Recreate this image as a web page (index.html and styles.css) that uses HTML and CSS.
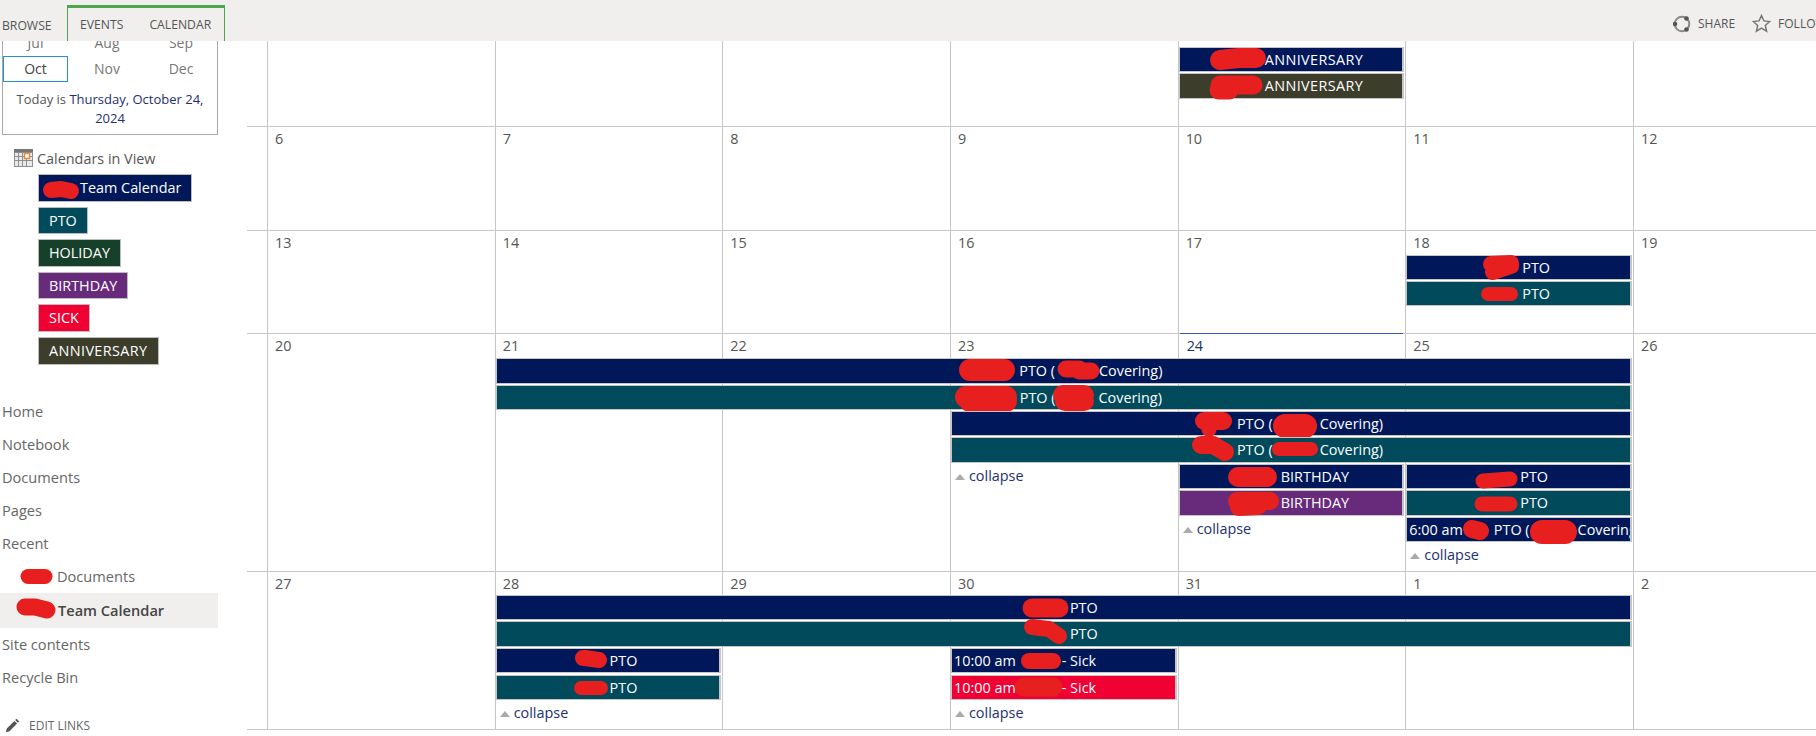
FILE: index.html
```html
<!DOCTYPE html>
<html lang="en">
<head>
<meta charset="utf-8">
<title>Team Calendar</title>
<link rel="stylesheet" href="styles.css">
</head>
<body>
<header class="ribbon">
  <span class="tab tab-browse">BROWSE</span>
  <div class="tab-group">
    <span class="tab">EVENTS</span>
    <span class="tab">CALENDAR</span>
  </div>
  <div class="tools">
    <svg class="tool-icon" width="18" height="20" viewBox="0 0 18 20"><circle class="share-ring" cx="9" cy="10" r="7.3"/><circle class="share-dot" cx="13.5" cy="4.5" r="2.3"/><circle class="share-dot" cx="2" cy="10" r="2.3"/><circle class="share-dot" cx="13.5" cy="15.5" r="2.3"/></svg>
    <span class="tool-label">SHARE</span>
    <svg class="tool-icon star" width="19" height="19" viewBox="0 0 19 19"><path class="star-path" d="M9.5 1.5l2.4 5.4 5.8.6-4.4 3.9 1.3 5.8-5.1-3-5.1 3 1.3-5.8-4.4-3.9 5.8-.6z"/></svg>
    <span class="tool-label">FOLLOW</span>
  </div>
</header>

<div class="main">
  <aside class="sidebar">
    <section class="picker">
      <div class="months">
        <span>Jul</span><span>Aug</span><span>Sep</span>
        <span class="current">Oct</span><span>Nov</span><span>Dec</span>
      </div>
      <p class="today-line">Today is <a>Thursday, October 24, 2024</a></p>
    </section>

    <h2 class="view-title">
      <svg width="19" height="18" viewBox="0 0 19 18"><rect width="19" height="18" fill="#8f8f8f"/><rect y="0" width="19" height="3" fill="#777"/><g fill="#e9e9e9"><rect x="1" y="4" width="3" height="3"/><rect x="5" y="4" width="3" height="3"/><rect x="9" y="4" width="3" height="3"/><rect x="13" y="4" width="5" height="3"/><rect x="1" y="8" width="3" height="3"/><rect x="5" y="8" width="3" height="3"/><rect x="9" y="8" width="3" height="3"/><rect x="13" y="8" width="5" height="3"/><rect x="1" y="12" width="3" height="5"/><rect x="5" y="12" width="3" height="5"/><rect x="9" y="12" width="3" height="5"/><rect x="13" y="12" width="5" height="5"/></g><rect x="10.5" y="4.5" width="5" height="5" fill="#fff" stroke="#e8873a" stroke-width="1.4"/></svg>
      Calendars in View
    </h2>
    <ul class="chips">
      <li class="chip navy"><svg class="blob" width="31" height="25"><path stroke-width="16" d="M2 15L12 14 22 16"/></svg>Team Calendar</li>
      <li class="chip teal">PTO</li>
      <li class="chip green">HOLIDAY</li>
      <li class="chip purple">BIRTHDAY</li>
      <li class="chip red">SICK</li>
      <li class="chip olive wide">ANNIVERSARY</li>
    </ul>

    <nav class="nav">
      <a class="nav-item">Home</a>
      <a class="nav-item">Notebook</a>
      <a class="nav-item">Documents</a>
      <a class="nav-item">Pages</a>
      <a class="nav-item">Recent</a>
      <a class="nav-item sub"><svg class="blob" width="30" height="33"><path stroke-width="15" d="M1 16.5H18"/></svg>Documents</a>
      <a class="nav-item sub selected"><svg class="blob" width="31" height="35"><path stroke-width="17" d="M-2 14L8 14 20 17"/></svg>Team Calendar</a>
      <a class="nav-item">Site contents</a>
      <a class="nav-item">Recycle Bin</a>
    </nav>
    <a class="edit-links">
      <svg width="15" height="15" viewBox="0 0 15 15"><path fill="#555" d="M11.5.8l2.7 2.7-1.3 1.3-2.7-2.7zM9.4 2.9l2.7 2.7-7.6 7.6-3.7 1 1-3.7z"/></svg>
      EDIT LINKS
    </a>
  </aside>

  <section class="calendar">
    <div class="week w1">
      <div class="cell c1"></div><div class="cell c2"></div><div class="cell c3"></div><div class="cell c4"></div><div class="cell c5"></div><div class="cell c6"></div><div class="cell c7"></div>
      <div class="ev navy wide c5 r2"><svg class="blob" width="46" height="23"><path stroke-width="20" d="M1 12L20 10 37 10"/></svg>ANNIVERSARY</div>
      <div class="ev olive wide c5 r3"><svg class="blob" width="46" height="23"><path stroke-width="19" d="M1 11L34 11M0 16L10 16"/></svg>ANNIVERSARY</div>
    </div>

    <div class="week w2">
      <div class="cell c1"><span class="num">6</span></div><div class="cell c2"><span class="num">7</span></div><div class="cell c3"><span class="num">8</span></div><div class="cell c4"><span class="num">9</span></div><div class="cell c5"><span class="num">10</span></div><div class="cell c6"><span class="num">11</span></div><div class="cell c7"><span class="num">12</span></div>
    </div>

    <div class="week w3">
      <div class="cell c1"><span class="num">13</span></div><div class="cell c2"><span class="num">14</span></div><div class="cell c3"><span class="num">15</span></div><div class="cell c4"><span class="num">16</span></div><div class="cell c5"><span class="num">17</span></div><div class="cell c6"><span class="num">18</span></div><div class="cell c7"><span class="num">19</span></div>
      <div class="ev navy c6 r2"><svg class="blob" width="35" height="23"><path stroke-width="16" d="M4 8L24 7 24 10 6 16"/></svg>PTO</div>
      <div class="ev teal c6 r3"><svg class="blob" width="35" height="23"><path stroke-width="14" d="M1 12H24"/></svg>PTO</div>
    </div>

    <div class="week w4">
      <div class="cell c1"><span class="num">20</span></div><div class="cell c2"><span class="num">21</span></div><div class="cell c3"><span class="num">22</span></div><div class="cell c4"><span class="num">23</span></div><div class="cell c5"><span class="num today">24</span></div><div class="cell c6"><span class="num">25</span></div><div class="cell c7"><span class="num">26</span></div>
      <div class="ev navy c2 s5 r2"><svg class="blob" width="55" height="23"><path stroke-width="22" d="M6 11H40"/></svg>PTO (<svg class="blob" width="44" height="23"><path stroke-width="17" d="M11 10H24M24 12H36"/></svg>Covering)</div>
      <div class="ev teal c2 s5 r3"><svg class="blob" width="55" height="23"><path stroke-width="22" d="M1 11L41 11M5 15L41 15"/></svg>PTO (<svg class="blob" width="43" height="23"><path stroke-width="20" d="M8 9H29M10 15H29"/></svg>Covering)</div>
      <div class="ev navy c4 s3 r4"><svg class="blob" width="38" height="23"><path stroke-width="18" d="M5 9L24 9"/><path stroke-width="13" d="M9 18L11 18"/></svg>PTO (<svg class="blob" width="47" height="23"><path stroke-width="24" d="M12 14H32"/></svg>Covering)</div>
      <div class="ev teal c4 s3 r5"><svg class="blob" width="38" height="23"><path stroke-width="18" d="M2 7L14 7 26 14"/></svg>PTO (<svg class="blob" width="47" height="23"><path stroke-width="14" d="M6 11H38"/></svg>Covering)</div>
      <div class="more c4 r6"><i class="tri"></i>collapse</div>
      <div class="ev navy c5 r6"><svg class="blob" width="48" height="23"><path stroke-width="20" d="M5 12H34"/></svg>BIRTHDAY</div>
      <div class="ev purple c5 r7"><svg class="blob" width="48" height="23"><path stroke-width="18" d="M4 10H37M6 16L25 15"/></svg>BIRTHDAY</div>
      <div class="more c5 r8"><i class="tri"></i>collapse</div>
      <div class="ev navy c6 r6"><svg class="blob" width="31" height="23"><path stroke-width="15" d="M-6 16L21 14"/></svg>PTO</div>
      <div class="ev teal c6 r7"><svg class="blob" width="31" height="23"><path stroke-width="15" d="M-7 13H21"/></svg>PTO</div>
      <div class="ev navy timed c6 r8"><span class="clip">6:00 am<svg class="blob" width="31" height="23"><path stroke-width="18" d="M9 11L17 13"/></svg>PTO (<svg class="blob" width="48" height="23"><path stroke-width="24" d="M12 14H35"/></svg>Covering)</span></div>
      <div class="more c6 r9"><i class="tri"></i>collapse</div>
    </div>

    <div class="week w5">
      <div class="cell c1"><span class="num">27</span></div><div class="cell c2"><span class="num">28</span></div><div class="cell c3"><span class="num">29</span></div><div class="cell c4"><span class="num">30</span></div><div class="cell c5"><span class="num">31</span></div><div class="cell c6"><span class="num">1</span></div><div class="cell c7"><span class="num">2</span></div>
      <div class="ev navy c2 s5 r2"><svg class="blob" width="41" height="23"><path stroke-width="19" d="M3 12H30"/></svg>PTO</div>
      <div class="ev teal c2 s5 r3"><svg class="blob" width="41" height="23"><path stroke-width="16" d="M3 5L20 7 30 14"/></svg>PTO</div>
      <div class="ev navy c2 r4"><svg class="blob" width="31" height="23"><path stroke-width="16" d="M4 9L6 9 20 11"/></svg>PTO</div>
      <div class="ev teal c2 r5"><svg class="blob" width="31" height="23"><path stroke-width="14" d="M2 12H22"/></svg>PTO</div>
      <div class="more c2 r6"><i class="tri"></i>collapse</div>
      <div class="ev navy timed c4 r4">10:00 am<svg class="blob" width="46" height="23"><path stroke-width="16" d="M13 12H37"/></svg>- Sick</div>
      <div class="ev red timed c4 r5">10:00 am<svg class="blob" width="46" height="23"><path stroke-width="19" d="M8 11H37"/></svg>- Sick</div>
      <div class="more c4 r6"><i class="tri"></i>collapse</div>
    </div>
  </section>
</div>
</body>
</html>
```
FILE: styles.css
```css
* { box-sizing: border-box; }
html, body { margin: 0; height: 736px; overflow: hidden; background: #fff; }
body { font-family: "Open Sans", "Liberation Sans", sans-serif; font-size: 14px; color: #555; }

/* ribbon */
.ribbon { position: relative; z-index: 2; display: flex; height: 41px; background: #f0efed; font-size: 12.2px; color: #555; }
.tab { line-height: 1; }
.tab-browse { padding: 20px 0 0 2px; width: 67px; }
.tab-group { display: flex; width: 158px; height: 36px; margin-top: 5px; border: 1px solid #4ea54c; border-top-width: 3px; border-bottom: 0; }
.tab-group .tab { padding: 11px 0 0 12px; }
.tab-group .tab + .tab { padding-left: 26px; }
.tools { display: flex; align-items: center; width: 143px; margin-left: auto; overflow: hidden; flex-shrink: 0; padding-top: 6px; font-size: 12px; }
.tool-icon { flex: none; }
.tool-label { flex: none; margin-left: 7px; }
.star { margin-left: 17px; }
.share-ring { fill: none; stroke: #888; stroke-width: 2; }
.share-dot { fill: #555; }
.star-path { fill: none; stroke: #777; stroke-width: 1.5; }

.main { display: flex; height: 695px; }

/* sidebar */
.sidebar { width: 247px; flex: none; }
.picker { width: 216px; margin: -12px 0 0 2px; border: 1px solid #a9a9a9; }
.months { display: grid; grid-template-columns: 65px 74px 70px; column-gap: 2px; text-align: center; color: #777; line-height: 26px; }
.months .current { color: #444; outline: 1px solid #2a8dd4; outline-offset: -1px; }
.today-line { margin: 8px 0 6px; padding: 0 6px; text-align: center; font-size: 13px; line-height: 19px; color: #555; }
.today-line a { color: #23306f; }
.view-title { display: flex; align-items: center; gap: 4px; margin: 13px 0 0 14px; height: 20px; font-size: 14.4px; font-weight: 400; color: #555; }
.chips { list-style: none; margin: 6px 0 0 38px; padding: 0; display: flex; flex-direction: column; align-items: flex-start; gap: 5px; }
.chip { height: 27.6px; padding: 0 10px; border: 1px solid #bdbdbd; line-height: 25.6px; color: #fff; white-space: nowrap; font-size: 14.4px; }
.wide { letter-spacing: 0.4px; }
.nav { margin-top: 30px; display: flex; flex-direction: column; }
.nav-item { height: 33px; padding-left: 2px; line-height: 33px; font-size: 14.6px; color: #666; white-space: nowrap; }
.sub { padding-left: 27px; }
.selected { width: 218px; height: 35px; line-height: 35px; background: #f0efed; color: #444; font-weight: 600; }
.edit-links { display: flex; align-items: center; gap: 9px; margin: 23px 0 0 5px; font-size: 12px; color: #666; }

/* colours */
.navy { background: #00185a; }
.teal { background: #004a5c; }
.green { background: #17402a; }
.purple { background: #682a7a; }
.red { background: #f00033; }
.olive { background: #3c3d2b; }

/* redaction marks */
.blob { overflow: visible; vertical-align: top; }
.blob path { fill: none; stroke: #e81f1f; stroke-linecap: round; stroke-linejoin: round; }

/* calendar */
.calendar { flex: 1; min-width: 0; }
.week { display: grid; grid-template-columns: 20px repeat(6, 227.67px) 1fr; border-top: 1px solid #c6c6c6; }
.w1 { height: 85px; border-top: 0; grid-template-rows: 6px 26.4px 26.4px 1fr; }
.w2 { height: 104px; grid-template-rows: 1fr; }
.w3 { height: 103px; grid-template-rows: 23.7px 26px 26px 1fr; }
.w4 { height: 238px; grid-template-rows: 24.3px repeat(8, 26.4px) 1fr; }
.w5 { height: 158.5px; grid-template-rows: 22.7px repeat(4, 26.7px) 1fr; border-bottom: 1px solid #c6c6c6; }

.cell { grid-row: 1 / -1; border-left: 1px solid #c6c6c6; }
.c1 { grid-column-start: 2; }
.c2 { grid-column-start: 3; }
.c3 { grid-column-start: 4; }
.c4 { grid-column-start: 5; }
.c5 { grid-column-start: 6; }
.c6 { grid-column-start: 7; }
.c7 { grid-column-start: 8; }
.s3 { grid-column-end: span 3; }
.s5 { grid-column-end: span 5; }
.r2 { grid-row-start: 2; }
.r3 { grid-row-start: 3; }
.r4 { grid-row-start: 4; }
.r5 { grid-row-start: 5; }
.r6 { grid-row-start: 6; }
.r7 { grid-row-start: 7; }
.r8 { grid-row-start: 8; }
.r9 { grid-row-start: 9; }

.num { display: block; padding-left: 7px; line-height: 23px; font-size: 14.4px; color: #555; }
.today { margin: -1px 2px 0 1px; border-top: 1px solid #3b5ca8; color: #23306f; }

.ev { height: 25.4px; margin: 0 1px 0 0; border: 1px solid #c6c6c6; border-width: 1px 2px; color: #fff; font-size: 14.4px; line-height: 24.5px; text-align: center; white-space: nowrap; }
.timed { text-align: left; padding-left: 2px; }
.clip { display: block; clip-path: inset(-12px 0); }
.more { padding: 2px 0 0 5px; font-size: 14.4px; line-height: 20px; color: #23306f; }
.tri { display: inline-block; width: 0; height: 0; margin-right: 4px; border: 5px solid transparent; border-top: 0; border-bottom: 6px solid #aaa; vertical-align: 1px; }
```
